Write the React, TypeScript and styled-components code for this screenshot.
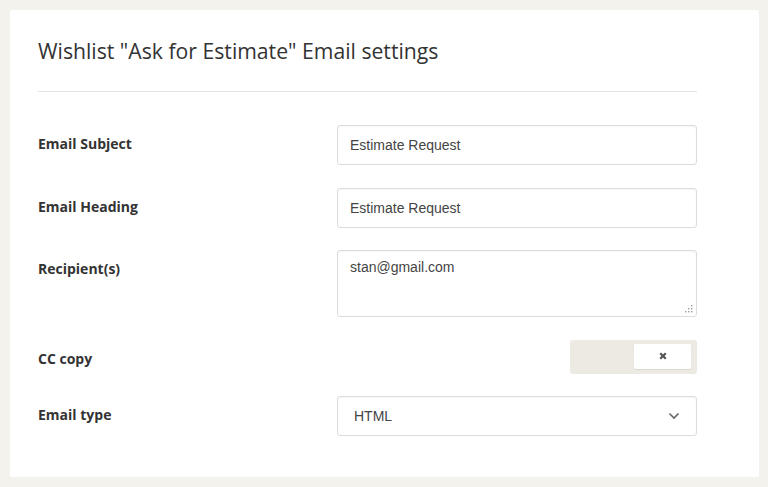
import styled, { createGlobalStyle } from "styled-components";

const GlobalStyle = createGlobalStyle`
  html, body {
    margin: 0;
    padding: 0;
    background-color: #f4f2ec;
  }
  * {
    box-sizing: border-box;
  }
`;

const Page = styled.div`
  width: 768px;
  height: 487px;
  padding: 10px 9px 10px 10px;
  background-color: #f4f2ec;
  font-family: "Open Sans", "Liberation Sans", sans-serif;
`;

const Card = styled.section`
  width: 749px;
  height: 467px;
  background-color: #ffffff;
  border-radius: 2px;
  padding: 26px 62px 0 28px;
`;

const Title = styled.h2`
  margin: 0;
  font-size: 21.2px;
  line-height: 29px;
  font-weight: 400;
  color: #333333;
`;

const Divider = styled.div`
  height: 1px;
  margin: 26px 0 33px;
  background-color: #e4e4e4;
`;

const Form = styled.div`
  display: grid;
  grid-template-columns: 299px 360px;
  row-gap: 22.5px;
`;

const Label = styled.label`
  align-self: start;
  padding-top: 9px;
  font-size: 14px;
  line-height: 20px;
  font-weight: 700;
  color: #333333;
`;

const fieldBase = `
  width: 100%;
  border: 1px solid #dcdcdc;
  border-radius: 3px;
  background-color: #ffffff;
  box-shadow: inset 0 1px 2px rgba(0, 0, 0, 0.04);
  font-family: "Liberation Sans", Arial, sans-serif;
  font-size: 14px;
  color: #444444;
  outline: none;
`;

const TextInput = styled.input`
  ${fieldBase}
  display: block;
  height: 40px;
  padding: 0 12px;
`;

const AreaWrap = styled.div`
  position: relative;
  height: 67px;
`;

const TextArea = styled.textarea`
  ${fieldBase}
  display: block;
  height: 67px;
  padding: 7px 12px;
  line-height: 18px;
  resize: none;
`;

const Grip = styled.svg`
  position: absolute;
  right: 4px;
  bottom: 4px;
`;

const ToggleRow = styled.div`
  display: flex;
  justify-content: flex-end;
`;

const Toggle = styled.div`
  width: 127px;
  height: 34px;
  padding: 4px 6px 5px 0;
  border-radius: 3px;
  background-color: #edeae3;
  display: flex;
  justify-content: flex-end;
`;

const Knob = styled.div`
  width: 57px;
  height: 25px;
  border-radius: 2px;
  background-color: #ffffff;
  box-shadow: 0 1px 1px rgba(0, 0, 0, 0.08);
  display: flex;
  align-items: center;
  justify-content: center;
`;

const SelectBox = styled.div`
  ${fieldBase}
  height: 40px;
  padding: 0 16px;
  display: flex;
  align-items: center;
  justify-content: space-between;
`;

const App = () => {
  return (
    <>
      <GlobalStyle />
      <Page>
        <Card>
          <Title>Wishlist "Ask for Estimate" Email settings</Title>
          <Divider />
          <Form>
            <Label>Email Subject</Label>
            <TextInput readOnly defaultValue="Estimate Request" />

            <Label>Email Heading</Label>
            <TextInput readOnly defaultValue="Estimate Request" />

            <Label>Recipient(s)</Label>
            <AreaWrap>
              <TextArea readOnly defaultValue="stan@gmail.com" />
              <Grip width="8" height="8" viewBox="0 0 8 8">
                <g fill="#9a9a9a">
                  <rect x="6" y="0" width="1.4" height="1.4" />
                  <rect x="3" y="3" width="1.4" height="1.4" />
                  <rect x="6" y="3" width="1.4" height="1.4" />
                  <rect x="0" y="6" width="1.4" height="1.4" />
                  <rect x="3" y="6" width="1.4" height="1.4" />
                  <rect x="6" y="6" width="1.4" height="1.4" />
                </g>
              </Grip>
            </AreaWrap>

            <Label>CC copy</Label>
            <ToggleRow>
              <Toggle>
                <Knob>
                  <svg width="8" height="8" viewBox="0 0 8 8">
                    <path d="M1.2 1.2 L6.8 6.8 M6.8 1.2 L1.2 6.8" stroke="#555" strokeWidth="2.2" />
                  </svg>
                </Knob>
              </Toggle>
            </ToggleRow>

            <Label>Email type</Label>
            <SelectBox>
              <span>HTML</span>
              <svg width="12" height="8" viewBox="0 0 12 8">
                <path d="M1.5 1.5 L6 6 L10.5 1.5" fill="none" stroke="#666" strokeWidth="1.6" />
              </svg>
            </SelectBox>
          </Form>
        </Card>
      </Page>
    </>
  );
};

export default App;
